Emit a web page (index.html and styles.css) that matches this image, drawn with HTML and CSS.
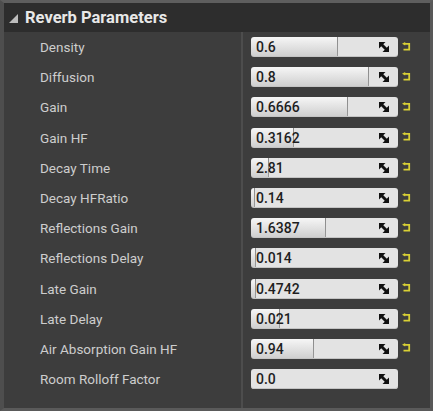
FILE: index.html
```html
<!DOCTYPE html>
<html>
<head>
<meta charset="utf-8">
<link rel="stylesheet" href="styles.css">
</head>
<body>
<div class="panel">
  <div class="header">
    <svg class="caret" width="9" height="9" viewBox="0 0 9 9"><polygon points="9,0 9,9 0,9" fill="#bdbdbd"/></svg>
    <span class="title">Reverb Parameters</span>
  </div>
  <div class="rows">
    <div class="row"><div class="label">Density</div><div class="cell"><div class="box" style="--p:86px"><span class="val">0.6</span><svg class="rs" viewBox="0 0 10 10"><use href="#rsz"/></svg></div><svg class="reset" viewBox="0 0 9 9"><use href="#rst"/></svg></div></div>
    <div class="row"><div class="label">Diffusion</div><div class="cell"><div class="box" style="--p:117px"><span class="val">0.8</span><svg class="rs" viewBox="0 0 10 10"><use href="#rsz"/></svg></div><svg class="reset" viewBox="0 0 9 9"><use href="#rst"/></svg></div></div>
    <div class="row"><div class="label">Gain</div><div class="cell"><div class="box" style="--p:96px"><span class="val">0.6666</span><svg class="rs" viewBox="0 0 10 10"><use href="#rsz"/></svg></div><svg class="reset" viewBox="0 0 9 9"><use href="#rst"/></svg></div></div>
    <div class="row"><div class="label">Gain HF</div><div class="cell"><div class="box" style="--p:42px"><span class="val">0.3162</span><svg class="rs" viewBox="0 0 10 10"><use href="#rsz"/></svg></div><svg class="reset" viewBox="0 0 9 9"><use href="#rst"/></svg></div></div>
    <div class="row"><div class="label">Decay Time</div><div class="cell"><div class="box" style="--p:17px"><span class="val">2.81</span><svg class="rs" viewBox="0 0 10 10"><use href="#rsz"/></svg></div><svg class="reset" viewBox="0 0 9 9"><use href="#rst"/></svg></div></div>
    <div class="row"><div class="label">Decay HFRatio</div><div class="cell"><div class="box" style="--p:3px"><span class="val">0.14</span><svg class="rs" viewBox="0 0 10 10"><use href="#rsz"/></svg></div><svg class="reset" viewBox="0 0 9 9"><use href="#rst"/></svg></div></div>
    <div class="row"><div class="label">Reflections Gain</div><div class="cell"><div class="box" style="--p:74px"><span class="val">1.6387</span><svg class="rs" viewBox="0 0 10 10"><use href="#rsz"/></svg></div><svg class="reset" viewBox="0 0 9 9"><use href="#rst"/></svg></div></div>
    <div class="row"><div class="label">Reflections Delay</div><div class="cell"><div class="box" style="--p:4px"><span class="val">0.014</span><svg class="rs" viewBox="0 0 10 10"><use href="#rsz"/></svg></div><svg class="reset" viewBox="0 0 9 9"><use href="#rst"/></svg></div></div>
    <div class="row"><div class="label">Late Gain</div><div class="cell"><div class="box" style="--p:4px"><span class="val">0.4742</span><svg class="rs" viewBox="0 0 10 10"><use href="#rsz"/></svg></div><svg class="reset" viewBox="0 0 9 9"><use href="#rst"/></svg></div></div>
    <div class="row"><div class="label">Late Delay</div><div class="cell"><div class="box" style="--p:28px"><span class="val">0.021</span><svg class="rs" viewBox="0 0 10 10"><use href="#rsz"/></svg></div><svg class="reset" viewBox="0 0 9 9"><use href="#rst"/></svg></div></div>
    <div class="row"><div class="label">Air Absorption Gain HF</div><div class="cell"><div class="box" style="--p:62px"><span class="val">0.94</span><svg class="rs" viewBox="0 0 10 10"><use href="#rsz"/></svg></div><svg class="reset" viewBox="0 0 9 9"><use href="#rst"/></svg></div></div>
    <div class="row"><div class="label">Room Rolloff Factor</div><div class="cell"><div class="box zero"><span class="val">0.0</span><svg class="rs" viewBox="0 0 10 10"><use href="#rsz"/></svg></div></div></div>
    <div class="row filler"><div class="label"></div><div class="cell"></div></div>
  </div>
</div>
<svg width="0" height="0" class="defs">
  <defs>
    <g id="rsz">
      <polygon points="0,0 6.5,0 0,6.5" fill="#111"/>
      <polygon points="10,10 3.5,10 10,3.5" fill="#111"/>
      <line x1="1" y1="1" x2="9" y2="9" stroke="#111" stroke-width="3"/>
    </g>
    <g id="rst">
      <path d="M2.5 1.8 H7.2 V7.6 H1.5" fill="none" stroke="#d8cf34" stroke-width="1.8"/>
      <polygon points="0,1.8 3.2,0 3.2,3.6" fill="#d8cf34"/>
    </g>
  </defs>
</svg>
</body>
</html>
```

FILE: styles.css
```css
html, body {
  margin: 0;
  padding: 0;
  background: #3c3c3c;
}
.defs {
  position: absolute;
  width: 0;
  height: 0;
}
.panel {
  width: 433px;
  height: 411px;
  box-sizing: border-box;
  border-top: 3px solid #5e5e5e;
  border-left: 4px solid #4e4e4e;
  border-right: 3px solid #585858;
  border-bottom: 3px solid #5a5a5a;
  background: #3d3d3d;
  display: flex;
  flex-direction: column;
  font-family: Roboto, "Liberation Sans", sans-serif;
}
.header {
  height: 29px;
  flex: none;
  background: #2d2d2d;
  display: flex;
  align-items: center;
  gap: 7px;
  padding-left: 5px;
}
.caret {
  width: 9px;
  height: 9px;
  margin-top: 2px;
}
.title {
  color: #e8e8e8;
  font-weight: 700;
  font-size: 16.5px;
}
.rows {
  flex: 1;
  display: flex;
  flex-direction: column;
}
.row {
  height: 30.2px;
  flex: none;
  display: grid;
  grid-template-columns: 237px 1fr;
}
.row.filler {
  flex: 1;
  height: auto;
}
.label {
  color: #cdcdcd;
  font-size: 13.5px;
  font-weight: 400;
  padding-left: 36px;
  display: flex;
  align-items: center;
}
.cell {
  border-left: 2px solid #4d4d4d;
  padding-left: 8px;
  display: flex;
  align-items: center;
  gap: 4px;
}
.box {
  width: 147px;
  height: 20px;
  border-radius: 3px;
  box-sizing: border-box;
  display: flex;
  align-items: center;
  justify-content: space-between;
  padding: 0 9px 0 5px;
  background:
    linear-gradient(#8a8a8a, #9a9a9a) var(--p) 0 / 1px 100% no-repeat,
    linear-gradient(#f6f6f6, #cdcdcd) 0 0 / var(--p) 100% no-repeat,
    #e3e3e3;
  box-shadow: inset 0 -1px 0 #c4c4c4;
}
.box.zero {
  background: #e3e3e3;
}
.val {
  color: #1e1e1e;
  font-size: 14px;
  font-weight: 500;
}
.rs {
  width: 10px;
  height: 10px;
}
.reset {
  width: 9px;
  height: 9px;
  margin-top: -2px;
}
```
